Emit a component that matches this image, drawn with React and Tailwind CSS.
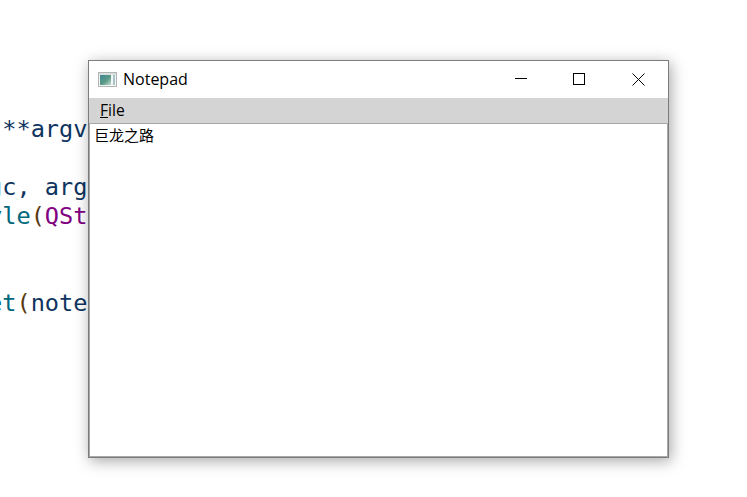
import React from 'react';

function CodeBehind() {
  return (
    <pre className="pt-[115px] -ml-[12px] text-[23.6px] leading-[29px] text-[#0f3460] font-['DejaVu_Sans_Mono',monospace]">
      <div>{' *'}<span>*argv</span></div>
      <div>&nbsp;</div>
      <div>gc, arg</div>
      <div><span className="text-[#00677c]">yle</span><span className="text-[#5a3a10]">(</span><span className="text-[#800080]">QSt</span></div>
      <div>&nbsp;</div>
      <div>&nbsp;</div>
      <div><span className="text-[#00677c]">et</span><span className="text-[#5a3a10]">(</span>note</div>
    </pre>
  );
}

function WindowButtons() {
  return (
    <div className="flex items-start h-[37px]">
      <button className="w-[56px] h-[37px] pt-[12px] flex justify-center">
        <svg width="12" height="12" viewBox="0 0 12 12"><path d="M0 5.5H12" stroke="#000" fill="none" /></svg>
      </button>
      <button className="w-[60px] h-[37px] pt-[12px] flex justify-center">
        <svg width="12" height="12" viewBox="0 0 12 12"><rect x="0.5" y="0.5" width="11" height="11" stroke="#000" fill="none" /></svg>
      </button>
      <button className="w-[59px] h-[37px] pt-[12px] flex justify-center">
        <svg width="13" height="13" viewBox="0 0 13 13"><path d="M0.5 0.5L12.5 12.5M12.5 0.5L0.5 12.5" stroke="#000" fill="none" /></svg>
      </button>
    </div>
  );
}

function AppIcon() {
  return (
    <svg width="19" height="15" viewBox="0 0 19 15" className="shrink-0">
      <defs>
        <linearGradient id="pane" x1="0" y1="0" x2="1" y2="1">
          <stop offset="0" stopColor="#3f8496" />
          <stop offset="0.55" stopColor="#5a9a86" />
          <stop offset="1" stopColor="#c5dcd4" />
        </linearGradient>
      </defs>
      <rect x="0.5" y="0.5" width="18" height="14" fill="#f4f6f6" stroke="#b4b4b4" />
      <rect x="1" y="1" width="17" height="2" fill="#dcdfdf" />
      <rect x="2" y="3" width="11" height="10" fill="url(#pane)" />
      <rect x="15" y="3" width="2" height="10" fill="#a5c3c8" />
    </svg>
  );
}

export default function App() {
  return (
    <div className="relative w-[747px] h-[497px] overflow-hidden bg-white">
      <CodeBehind />

      <div className="absolute left-[88px] top-[60px] w-[581px] h-[398px] flex flex-col bg-white border border-[#7c7c7c] shadow-[2px_3px_14px_rgba(0,0,0,0.35)] font-['Open_Sans','Noto_Sans',sans-serif]">
        <div className="flex items-center justify-between h-[37px] pl-[9px]">
          <div className="flex items-center gap-[6px]">
            <AppIcon />
            <span className="text-[16px] leading-[22px] -mt-[2px] text-black">Notepad</span>
          </div>
          <WindowButtons />
        </div>

        <div className="h-[25px] bg-[#d4d4d4] flex items-center pl-[11px] text-[15.6px] text-black">
          <span><span className="underline">F</span>ile</span>
        </div>

        <div className="flex-1 bg-white border border-[#a8a8a8] pl-[4px] pt-[1px] text-[15px] leading-[20px] text-black font-['Noto_Sans_CJK_SC',sans-serif]">
          巨龙之路
        </div>
      </div>
    </div>
  );
}
